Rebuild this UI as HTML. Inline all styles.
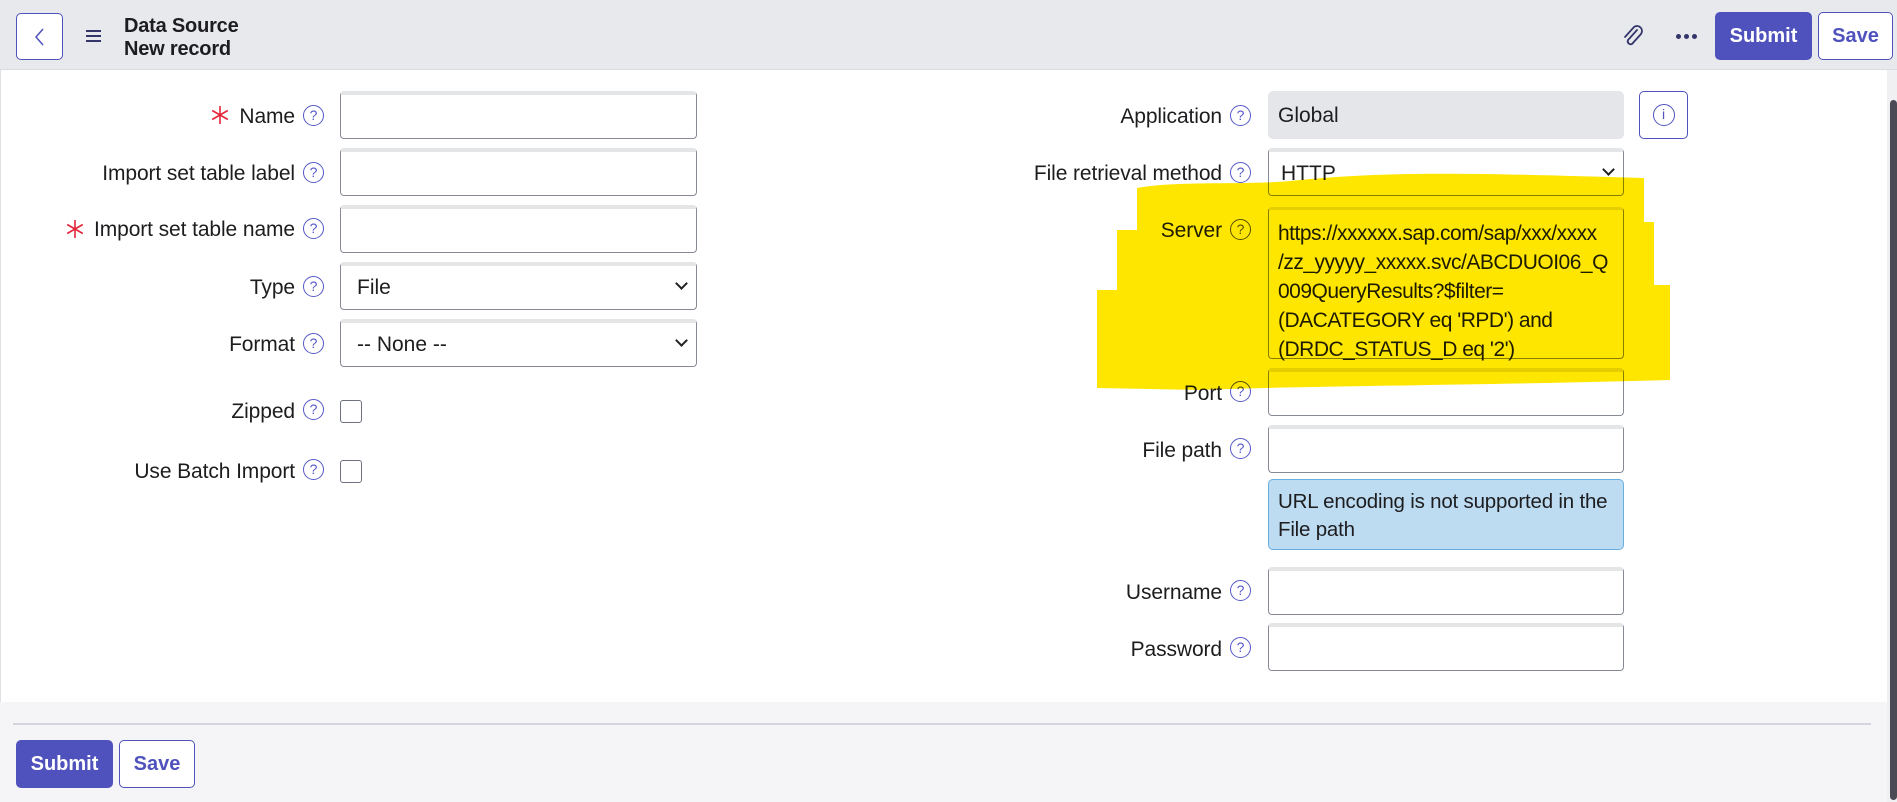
<!DOCTYPE html>
<html><head><meta charset="utf-8"><style>
*{box-sizing:border-box;margin:0;padding:0}
body{width:1897px;height:802px;overflow:hidden;background:#fff;font-family:"Liberation Sans",sans-serif;color:#1d1d1f;position:relative}
.hdr{position:absolute;left:0;top:0;width:1897px;height:70px;background:#e8e9ed;border-bottom:1px solid #dcdde2}
.abs{position:absolute}
.btn{position:absolute;border:1.5px solid #4f52bd;border-radius:5px;background:#fff;color:#4f52bd;font-weight:bold;font-size:20px;display:flex;align-items:center;justify-content:center}
.btn.p{background:#4f52bd;color:#fff}
.lbl{position:absolute;font-size:21px;text-align:right;white-space:nowrap;letter-spacing:-0.1px}
.help{position:absolute;width:21px;height:21px;border:1.5px solid #5558c8;border-radius:50%;color:#5558c8;font-size:14px;line-height:18px;text-align:center}
.inp{position:absolute;border:1px solid #868a95;border-radius:4px;background:#fff;border-top:4px solid #e4e5e7}
.inp.s{font-size:21px;padding-left:16px;display:flex;align-items:center}
.inp.s:after{content:"";position:absolute;right:10px;top:13px;width:7px;height:7px;border-right:2px solid #222;border-bottom:2px solid #222;transform:rotate(45deg)}
.chk{position:absolute;width:22px;height:23px;border:1.5px solid #6e7280;border-radius:3px;background:#fff}
.star{position:absolute}
</style></head><body>
<div class="hdr"></div>
<div class="btn" style="left:16px;top:13px;width:47px;height:47px;border-width:1px"><svg width="14" height="20" viewBox="0 0 14 20"><path d="M10 2 L3 10 L10 18" fill="none" stroke="#4f52bd" stroke-width="1.5"/></svg></div>
<div class="abs" style="left:86px;top:30px;width:15px;height:12px;border-top:2.5px solid #34356a;border-bottom:2.5px solid #34356a"><div style="margin-top:2.5px;height:2.5px;background:#34356a"></div></div>
<div class="abs" style="left:124px;top:15px;font-size:20px;font-weight:bold;line-height:23px;letter-spacing:-0.2px">Data Source<br>New record</div>
<svg class="abs" style="left:1620px;top:22px" width="24" height="26" viewBox="0 0 24 26"><path d="M17 8 L8 18 a3 3 0 0 0 4 4 L21 12 a5 5 0 0 0 -7 -7 L5 15" fill="none" stroke="#34356a" stroke-width="1.8" stroke-linecap="round"/></svg>
<div class="abs" style="left:1676px;top:34px;display:flex;gap:3px"><i style="width:5px;height:5px;border-radius:50%;background:#34356a"></i><i style="width:5px;height:5px;border-radius:50%;background:#34356a"></i><i style="width:5px;height:5px;border-radius:50%;background:#34356a"></i></div>
<div class="btn p" style="left:1715px;top:12px;width:97px;height:48px">Submit</div>
<div class="btn" style="left:1818px;top:12px;width:75px;height:48px;border-width:1px">Save</div>

<svg class="star" style="left:211px;top:106px" width="18" height="18" viewBox="0 0 18 18"><path d="M9 0V18M1.2 4.5L16.8 13.5M1.2 13.5L16.8 4.5" stroke="#e3263a" stroke-width="1.6"/></svg>
<div class="lbl" style="right:1602px;top:105px">Name</div>
<div class="help" style="left:303px;top:105px">?</div>
<div class="inp" style="left:340px;top:91px;width:357px;height:48px"></div>

<div class="lbl" style="right:1602px;top:162px">Import set table label</div>
<div class="help" style="left:303px;top:162px">?</div>
<div class="inp" style="left:340px;top:148px;width:357px;height:48px"></div>

<svg class="star" style="left:66px;top:220px" width="18" height="18" viewBox="0 0 18 18"><path d="M9 0V18M1.2 4.5L16.8 13.5M1.2 13.5L16.8 4.5" stroke="#e3263a" stroke-width="1.6"/></svg>
<div class="lbl" style="right:1602px;top:218px">Import set table name</div>
<div class="help" style="left:303px;top:218px">?</div>
<div class="inp" style="left:340px;top:205px;width:357px;height:48px"></div>

<div class="lbl" style="right:1602px;top:276px">Type</div>
<div class="help" style="left:303px;top:276px">?</div>
<div class="inp s" style="left:340px;top:262px;width:357px;height:48px">File</div>

<div class="lbl" style="right:1602px;top:333px">Format</div>
<div class="help" style="left:303px;top:333px">?</div>
<div class="inp s" style="left:340px;top:319px;width:357px;height:48px">-- None --</div>

<div class="lbl" style="right:1602px;top:400px">Zipped</div>
<div class="help" style="left:303px;top:399px">?</div>
<div class="chk" style="left:340px;top:400px"></div>

<div class="lbl" style="right:1602px;top:460px">Use Batch Import</div>
<div class="help" style="left:303px;top:459px">?</div>
<div class="chk" style="left:340px;top:460px"></div>

<div class="lbl" style="right:675px;top:105px">Application</div>
<div class="help" style="left:1230px;top:105px">?</div>
<div class="abs" style="left:1268px;top:91px;width:356px;height:48px;background:#e5e6ea;border-radius:5px;font-size:21px;padding:13px 0 0 10px">Global</div>
<div class="btn" style="left:1639px;top:91px;width:49px;height:48px;border-width:1px"><div style="width:22px;height:22px;border:1.5px solid #4f52bd;border-radius:50%;font-size:14px;line-height:19px;text-align:center;font-weight:normal">i</div></div>

<div class="lbl" style="right:675px;top:162px">File retrieval method</div>
<div class="help" style="left:1230px;top:162px">?</div>
<div class="inp s" style="left:1268px;top:148px;width:356px;height:48px;padding-left:12px">HTTP</div>

<div class="lbl" style="right:675px;top:219px">Server</div>
<div class="help" style="left:1230px;top:219px">?</div>
<div class="inp" style="left:1268px;top:207px;width:356px;height:152px;border-top-width:3px;font-size:21px;line-height:29px;padding:9px 0 0 9px;white-space:nowrap;letter-spacing:-0.5px">https://xxxxxx.sap.com/sap/xxx/xxxx<br>/zz_yyyyy_xxxxx.svc/ABCDUOI06_Q<br>009QueryResults?$filter=<br>(DACATEGORY eq 'RPD') and<br>(DRDC_STATUS_D eq '2')</div>

<div class="lbl" style="right:675px;top:382px">Port</div>
<div class="help" style="left:1230px;top:381px">?</div>
<div class="inp" style="left:1268px;top:368px;width:356px;height:48px"></div>

<div class="lbl" style="right:675px;top:439px">File path</div>
<div class="help" style="left:1230px;top:438px">?</div>
<div class="inp" style="left:1268px;top:425px;width:356px;height:48px"></div>

<div class="abs" style="left:1268px;top:479px;width:356px;height:71px;background:#bddcf1;border:1px solid #6aaee0;border-radius:5px;font-size:20.5px;line-height:28px;padding:8px 0 0 9px;white-space:nowrap;letter-spacing:-0.2px">URL encoding is not supported in the<br>File path</div>

<div class="lbl" style="right:675px;top:581px">Username</div>
<div class="help" style="left:1230px;top:580px">?</div>
<div class="inp" style="left:1268px;top:567px;width:356px;height:48px"></div>

<div class="lbl" style="right:675px;top:638px">Password</div>
<div class="help" style="left:1230px;top:637px">?</div>
<div class="inp" style="left:1268px;top:623px;width:356px;height:48px"></div>

<svg class="abs" style="left:0;top:0;mix-blend-mode:multiply" width="1897" height="802"><path d="M1137 188 C1180 180 1250 186 1300 180 C1400 170 1500 174 1644 178 L1644 222 L1654 222 L1654 285 L1670 285 L1670 380 C1500 385 1300 386 1200 390 L1097 388 L1097 290 L1117 290 L1117 230 L1137 230 Z" fill="#ffe600"/></svg>

<div class="abs" style="left:0;top:702px;width:1887px;height:100px;background:#f5f5f7"></div>
<div class="abs" style="left:13px;top:723px;width:1858px;height:2px;background:#d4d5dc"></div>
<div class="btn p" style="left:16px;top:740px;width:97px;height:48px">Submit</div>
<div class="btn" style="left:119px;top:740px;width:76px;height:48px;border-width:1px">Save</div>

<div class="abs" style="left:1887px;top:70px;width:10px;height:732px;background:#f0f0f2"></div>
<div class="abs" style="left:1890px;top:100px;width:7px;height:700px;background:#4b4b55;border-radius:4px"></div>
<div class="abs" style="left:0;top:70px;width:1px;height:632px;background:#e0e0e4"></div>
</body></html>
